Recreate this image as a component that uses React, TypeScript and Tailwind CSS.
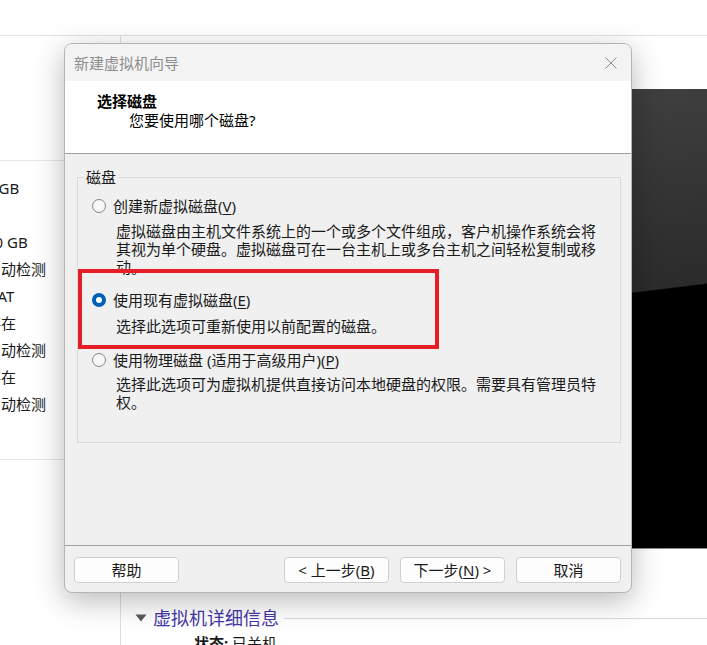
import React from 'react';

const sidebarValues = ['4 GB', '', '60 GB', '自动检测', 'NAT', '存在', '自动检测', '存在', '自动检测'];

const Radio: React.FC<{ checked?: boolean }> = ({ checked }) =>
  checked ? (
    <span className="flex h-[14px] w-[14px] shrink-0 items-center justify-center rounded-full bg-[#005fb8]">
      <span className="h-[6px] w-[6px] rounded-full bg-white" />
    </span>
  ) : (
    <span className="h-[14px] w-[14px] shrink-0 rounded-full border border-[#858585] bg-[#f7f7f7]" />
  );

const Key: React.FC<{ k: string }> = ({ k }) => <span className="underline underline-offset-2">{k}</span>;

const Button: React.FC<{ children: React.ReactNode }> = ({ children }) => (
  <button className="flex h-[26px] w-[105px] items-center justify-center rounded-[4px] border border-[#d0d0d0] bg-[#fdfdfd] text-[15px] leading-[18px] text-[#1a1a1a]">
    {children}
  </button>
);

const App: React.FC = () => {
  return (
    <div className="relative h-[645px] w-[707px] overflow-hidden bg-white font-['Noto_Sans','Noto_Sans_CJK_SC',sans-serif] text-[#1a1a1a]">
      {/* background: VMware main window */}
      <div className="h-[36px] border-b border-[#e2e2e2]" />
      <div className="flex h-[609px]">
        <div className="w-[121px] shrink-0 overflow-hidden border-r border-[#dedede]">
          <div className="h-[125px] border-b border-[#e6e6e6]" />
          <div className="h-[299px] border-b border-[#e6e6e6] pt-[14px]">
            {sidebarValues.map((v, i) => (
              <div key={i} className="ml-[-14px] h-[27px] whitespace-nowrap text-[15px] leading-[27px]">
                {v}
              </div>
            ))}
          </div>
        </div>
        <div className="flex min-w-0 flex-1 flex-col overflow-hidden">
          <div className="ml-[511px] mt-[53px] h-[460px] w-[200px] shrink-0 border-b border-[#8c8c8c] bg-[linear-gradient(173deg,#3f3f3f_0%,#2b2b2b_42%,#000_42.3%,#000_100%)]" />
          <div className="mt-[58px] flex h-[22px] items-center">
            <svg width="12" height="8" viewBox="0 0 12 8" className="ml-[14px] shrink-0">
              <path d="M0.5 0.5 L11.5 0.5 L6 7.5 Z" fill="#5a5a5a" />
            </svg>
            <span className="ml-[6px] whitespace-nowrap text-[18px] leading-[22px] text-[#4537a8]">虚拟机详细信息</span>
            <div className="ml-[5px] h-px flex-1 bg-[#d9d9d9]" />
          </div>
          <div className="mt-[5px] pl-[73px] text-[15px] leading-[18px] whitespace-nowrap">
            <span className="font-bold">状态:</span> 已关机
          </div>
        </div>
      </div>

      {/* wizard dialog */}
      <div className="absolute left-[64px] top-[43px] flex h-[550px] w-[568px] flex-col overflow-hidden rounded-[8px] border border-[#b4b4b4] bg-[#f0f0f0] shadow-[0_8px_30px_rgba(0,0,0,0.28)]">
        <div className="flex h-[37px] shrink-0 items-center justify-between bg-[#f3f3f3] pl-[9px] pr-[14px]">
          <span className="text-[15px] leading-[18px] text-[#8e8e8e]">新建虚拟机向导</span>
          <svg width="12" height="12" viewBox="0 0 12 12">
            <path d="M0.5 0.5 L11.5 11.5 M11.5 0.5 L0.5 11.5" stroke="#8a8a8a" strokeWidth="1" />
          </svg>
        </div>
        <div className="h-[73px] shrink-0 border-b border-[#a0a0a0] bg-white pl-[32px] pt-[11px]">
          <div className="text-[15px] font-bold leading-[19px] text-black">选择磁盘</div>
          <div className="pl-[32px] text-[15px] leading-[19px] text-black">您要使用哪个磁盘?</div>
        </div>
        <div className="h-[392px] shrink-0 border-b border-[#a0a0a0] pt-[23px]">
          <div className="relative ml-[12px] h-[266px] w-[544px] border border-[#d9d9d9] pt-[19px] text-[15px] leading-[18px]">
            <span className="absolute left-[6px] top-[-10px] bg-[#f0f0f0] px-[2px] leading-[18px]">磁盘</span>

            <div className="flex h-[18px] items-center pl-[14px]">
              <Radio />
              <span className="ml-[7px] whitespace-nowrap">
                创建新虚拟磁盘(<Key k="V" />)
              </span>
            </div>
            <div className="mt-[7px] whitespace-nowrap pl-[38px]">
              <div>虚拟磁盘由主机文件系统上的一个或多个文件组成，客户机操作系统会将</div>
              <div>其视为单个硬盘。虚拟磁盘可在一台主机上或多台主机之间轻松复制或移</div>
              <div>动。</div>
            </div>

            <div className="mt-[15px] flex h-[18px] items-center pl-[14px]">
              <Radio checked />
              <span className="ml-[7px] whitespace-nowrap">
                使用现有虚拟磁盘(<Key k="E" />)
              </span>
            </div>
            <div className="mt-[8px] whitespace-nowrap pl-[38px]">选择此选项可重新使用以前配置的磁盘。</div>

            <div className="mt-[16px] flex h-[18px] items-center pl-[14px]">
              <Radio />
              <span className="ml-[7px] whitespace-nowrap">
                使用物理磁盘 (适用于高级用户)(<Key k="P" />)
              </span>
            </div>
            <div className="mt-[6px] whitespace-nowrap pl-[38px]">
              <div>选择此选项可为虚拟机提供直接访问本地硬盘的权限。需要具有管理员特</div>
              <div>权。</div>
            </div>
          </div>
        </div>
        <div className="flex flex-1 items-start justify-between pl-[9px] pr-[10px] pt-[11px]">
          <Button>帮助</Button>
          <div className="flex gap-[11px]">
            <Button>
              &lt; 上一步(<Key k="B" />)
            </Button>
            <Button>
              下一步(<Key k="N" />) &gt;
            </Button>
            <Button>取消</Button>
          </div>
        </div>
      </div>

      {/* annotation */}
      <div className="absolute left-[78px] top-[269px] h-[80px] w-[361px] border-4 border-[#e61f26]" />
    </div>
  );
};

export default App;
